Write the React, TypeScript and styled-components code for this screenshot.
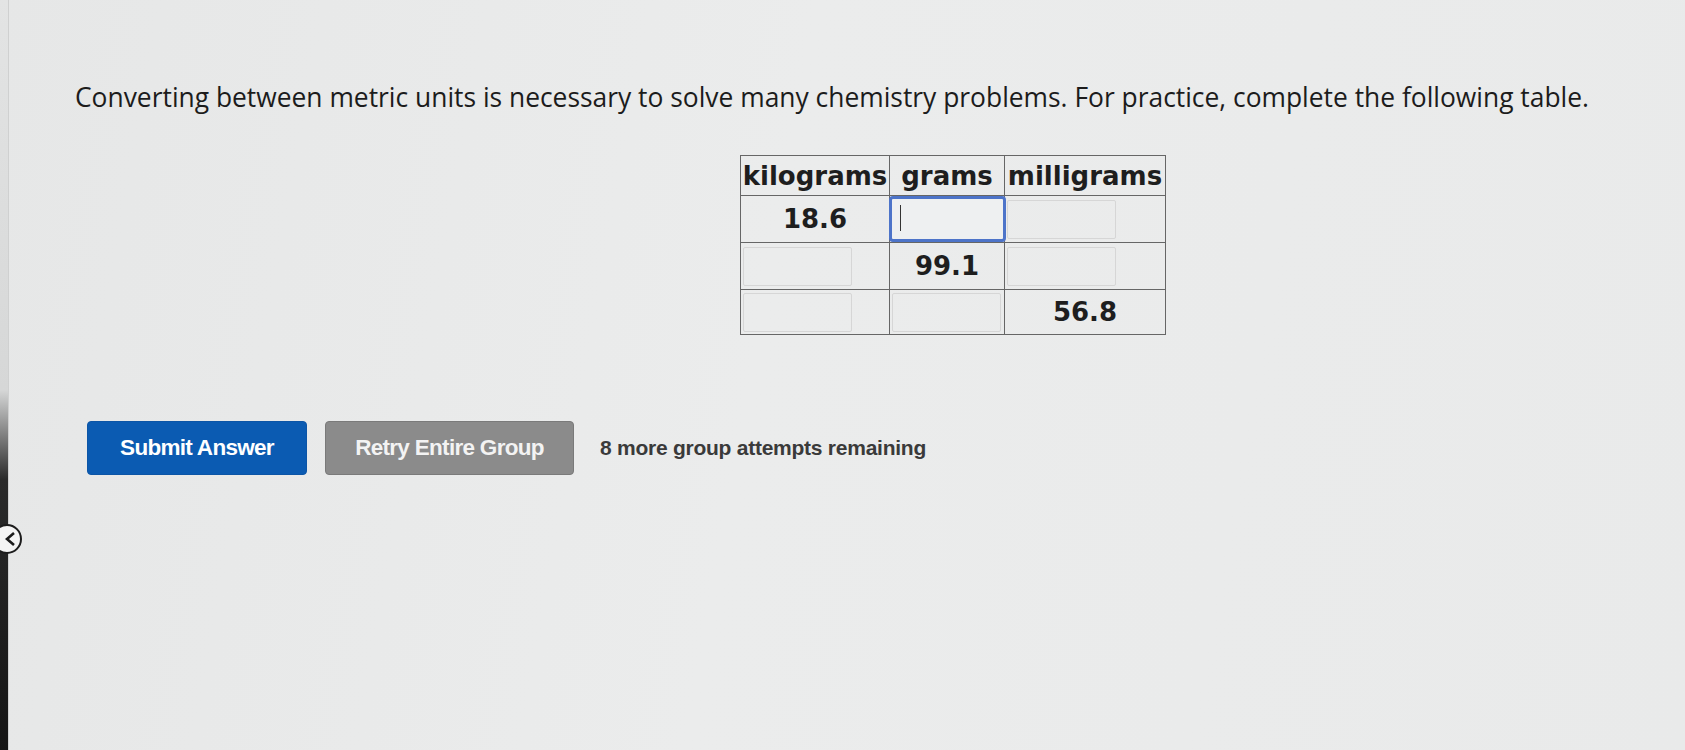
import React from "react";
import styled, { createGlobalStyle } from "styled-components";

const Global = createGlobalStyle`
  html, body { margin: 0; padding: 0; }
  body {
    width: 1685px;
    height: 750px;
    overflow: hidden;
    background: linear-gradient(100deg, #e6e7e7 0%, #ebecec 45%, #e9eaea 100%);
    font-family: "Open Sans", "Liberation Sans", sans-serif;
  }
`;

const Page = styled.main`
  position: relative;
  height: 750px;
  padding: 79px 0 0 75px;
  box-sizing: border-box;
`;

const Prompt = styled.p`
  margin: 0;
  font-family: "Open Sans", sans-serif;
  font-size: 26.4px;
  line-height: 36px;
  color: #1c1c1c;
  white-space: nowrap;
`;

const TableWrap = styled.div`
  margin: 40px 0 0 665px;
`;

const Grid = styled.table`
  border-collapse: collapse;
  table-layout: fixed;
  width: 425px;
  border: 1px solid #555;
  font-family: "DejaVu Sans", Verdana, sans-serif;
  font-weight: bold;
  font-size: 26px;
  color: #1e1e1e;
`;

const Th = styled.th<{ $w: number }>`
  width: ${(p) => p.$w}px;
  height: 40px;
  padding: 0;
  border: 1px solid #666;
  text-align: center;
  font-weight: bold;
  white-space: nowrap;
  overflow: visible;
  box-sizing: border-box;
`;

const Td = styled.td<{ $h: number }>`
  height: ${(p) => p.$h}px;
  padding: 0 2px;
  border: 1px solid #666;
  text-align: center;
  vertical-align: middle;
  box-sizing: border-box;
`;

const Field = styled.div<{ $focus?: boolean }>`
  position: relative;
  box-sizing: border-box;
  width: ${(p) => (p.$focus ? "117px" : "109px")};
  height: ${(p) => (p.$focus ? "46px" : "39px")};
  margin: ${(p) => (p.$focus ? "0 -3px" : "0")};
  border: ${(p) => (p.$focus ? "3px solid #4d74c9" : "1px solid #d6d6d6")};
  border-radius: ${(p) => (p.$focus ? "4px" : "2px")};
  background: ${(p) => (p.$focus ? "#eef0f1" : "transparent")};
`;

const Caret = styled.span`
  position: absolute;
  left: 8px;
  top: 6px;
  width: 1px;
  height: 26px;
  background: #333;
`;

const Actions = styled.div`
  display: flex;
  align-items: center;
  margin-top: 86px;
  margin-left: 12px;
`;

const Button = styled.button<{ $variant: "primary" | "muted" }>`
  box-sizing: border-box;
  height: 54px;
  padding: 0;
  width: ${(p) => (p.$variant === "primary" ? "220px" : "249px")};
  margin-right: ${(p) => (p.$variant === "primary" ? "18px" : "26px")};
  border-radius: 4px;
  border: 1px solid ${(p) => (p.$variant === "primary" ? "#0c55a6" : "#7a7a7a")};
  background: ${(p) => (p.$variant === "primary" ? "#0b5bb2" : "#8b8b8b")};
  color: ${(p) => (p.$variant === "primary" ? "#ffffff" : "#f3f3f3")};
  font-family: "Liberation Sans", Arial, sans-serif;
  font-weight: bold;
  font-size: 22.5px;
  letter-spacing: -0.7px;
`;

const Remaining = styled.span`
  font-family: "Liberation Sans", Arial, sans-serif;
  font-weight: bold;
  font-size: 21px;
  color: #3a3a3a;
  letter-spacing: -0.25px;
`;

const EdgeBar = styled.div`
  position: fixed;
  left: 0;
  top: 0;
  bottom: 0;
  width: 8px;
  background: linear-gradient(
    180deg,
    #e3e4e4 0%,
    #d6d7d7 52%,
    #2a2a2a 64%,
    #151515 100%
  );
  border-right: 1px solid #cfd0d0;
`;

const EdgeHandle = styled.div`
  position: fixed;
  left: -8px;
  top: 524px;
  width: 30px;
  height: 30px;
  border-radius: 50%;
  background: #f4f4f4;
  border: 2px solid #1c1c1c;
  display: flex;
  align-items: center;
  justify-content: flex-end;
  padding-right: 4px;
  box-sizing: border-box;
`;

const rows: { h: number; cells: (string | null | "focus")[] }[] = [
  { h: 46, cells: ["18.6", "focus", null] },
  { h: 47, cells: [null, "99.1", null] },
  { h: 45, cells: [null, null, "56.8"] },
];

export default function App() {
  return (
    <>
      <Global />
      <Page>
        <Prompt>
          Converting between metric units is necessary to solve many chemistry problems. For practice, complete the
          following table.
        </Prompt>
        <TableWrap>
          <Grid>
            <thead>
              <tr>
                <Th $w={149}>kilograms</Th>
                <Th $w={115}>grams</Th>
                <Th $w={161}>milligrams</Th>
              </tr>
            </thead>
            <tbody>
              {rows.map((r, i) => (
                <tr key={i}>
                  {r.cells.map((c, j) => (
                    <Td key={j} $h={r.h}>
                      {c === "focus" ? (
                        <Field $focus>
                          <Caret />
                        </Field>
                      ) : c === null ? (
                        <Field />
                      ) : (
                        c
                      )}
                    </Td>
                  ))}
                </tr>
              ))}
            </tbody>
          </Grid>
        </TableWrap>
        <Actions>
          <Button $variant="primary">Submit Answer</Button>
          <Button $variant="muted">Retry Entire Group</Button>
          <Remaining>8 more group attempts remaining</Remaining>
        </Actions>
      </Page>
      <EdgeBar />
      <EdgeHandle>
        <svg width="12" height="16" viewBox="0 0 12 16">
          <path d="M10 2 L3 8 L10 14" fill="none" stroke="#1c1c1c" strokeWidth="2.6" />
        </svg>
      </EdgeHandle>
    </>
  );
}
